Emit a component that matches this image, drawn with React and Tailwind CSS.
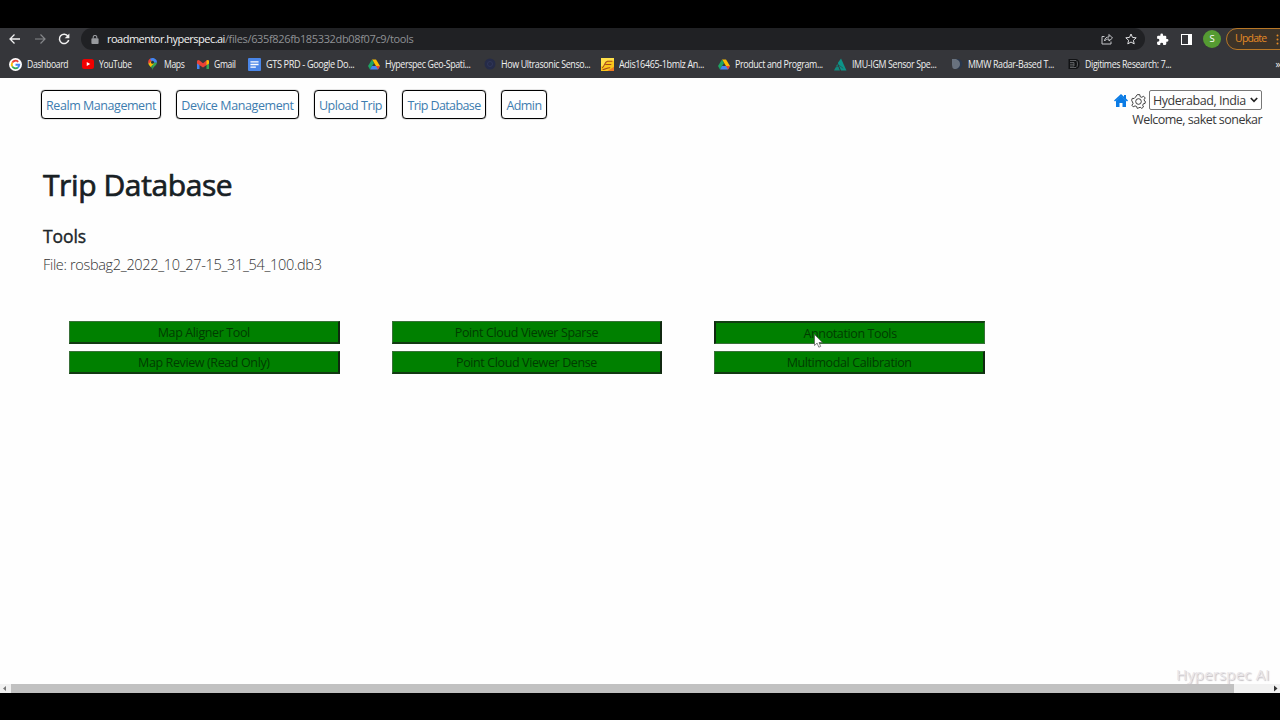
import React from 'react';

const DriveIcon = () => (
  <svg viewBox="0 0 24 22" className="w-[12px] h-[11px]">
    <path d="M8 1h8l8 13h-8z" fill="#fbbc04" />
    <path d="M8 1l4 7-8 13-4-7z" fill="#1ea362" />
    <path d="M8 14h16l-4 7H4z" fill="#4285f4" />
    <path d="M16 14h8l-4 7z" fill="#ea4335" />
  </svg>
);

const GoogleIcon = () => (
  <svg viewBox="0 0 24 24" className="w-[13px] h-[13px]">
    <circle cx="12" cy="12" r="12" fill="#fff" />
    <g fill="none" strokeWidth="3.4">
      <path d="M17 7A7 7 0 0 0 6 8.5" stroke="#ea4335" />
      <path d="M6 8.5a7 7 0 0 0 0 7" stroke="#fbbc04" />
      <path d="M6 15.5a7 7 0 0 0 10.5 2" stroke="#34a853" />
      <path d="M16.5 17.5A7 7 0 0 0 19 12.5h-7" stroke="#4285f4" />
    </g>
  </svg>
);

const YoutubeIcon = () => (
  <svg viewBox="0 0 24 20" className="w-[12px] h-[10px]">
    <rect width="24" height="20" rx="5" fill="#f00000" />
    <path d="M9.5 6v8l7-4z" fill="#fff" />
  </svg>
);

const MapsIcon = () => (
  <svg viewBox="0 0 18 24" className="w-[9px] h-[12px]">
    <path d="M9 24C8 17 0 15 0 8.500l9 0z" fill="#34a853" />
    <path d="M9 24c1-7 9-9 9-15.500H9z" fill="#34a853" />
    <path d="M1 12C-1 6 2 2 5 1l4 7.500z" fill="#ea4335" />
    <path d="M4 1.500C10-2 18 2 18 9l-9 0z" fill="#4285f4" />
    <path d="M1 12l7-7 4 6-7 7z" fill="#fbbc04" />
    <circle cx="9" cy="8.500" r="3" fill="#263238" />
  </svg>
);

const GmailIcon = () => (
  <svg viewBox="0 0 24 18" className="w-[12px] h-[9px]">
    <path d="M0 2h5v16H0z" fill="#4285f4" />
    <path d="M19 2h5v16h-5z" fill="#34a853" />
    <path d="M0 2Q2-1 5 1l7 5.500L19 1q3-2 5 1v5l-12 8L0 7z" fill="#ea4335" />
    <path d="M19 1q3-2 5 1v5l-5 3z" fill="#fbbc04" />
  </svg>
);

const DocsIcon = () => (
  <svg viewBox="0 0 24 24" className="w-[13px] h-[13px]">
    <rect width="24" height="24" rx="2" fill="#4a86e8" />
    <path d="M4.500 7h15M4.500 12h15M4.500 17h10" stroke="#fff" strokeWidth="2.400" />
  </svg>
);

const UltrasonicIcon = () => (
  <svg viewBox="0 0 24 24" className="w-[12px] h-[12px]">
    <circle cx="12" cy="12" r="11" fill="#252b48" />
    <circle cx="12" cy="12" r="5" fill="none" stroke="#303659" strokeWidth="2" />
  </svg>
);

const AdisIcon = () => (
  <svg viewBox="0 0 24 24" className="w-[13px] h-[13px]">
    <rect width="24" height="24" fill="#f9c51c" />
    <path d="M0 0h24v5H12L4 15H0z" fill="#ffe04a" />
    <path d="M2 18c5-2 4-11 10-12h9M8 12h11M3 21c6 1 8-4 14-3" fill="none" stroke="#a8481a" strokeWidth="2" />
    <path d="M12 24l12-8v8z" fill="#ef7b22" />
  </svg>
);

const ImuIcon = () => (
  <svg viewBox="0 0 24 24" className="w-[13px] h-[13px]">
    <path d="M13 1l10 22H13L7 9z" fill="#0d9488" />
    <path d="M6 11l5 12H0z" fill="#12877c" />
    <path d="M2 17l8-3 7 5" fill="none" stroke="#35363a" />
  </svg>
);

const RadarIcon = () => (
  <svg viewBox="0 0 24 24" className="w-[12px] h-[12px]">
    <circle cx="13" cy="12" r="10" fill="#29364b" />
    <path d="M2 2h8q8 3 8 10t-8 10H6q-4-2-4-8z" fill="#68717d" />
  </svg>
);

const DigitimesIcon = () => (
  <svg viewBox="0 0 24 24" className="w-[12px] h-[12px]">
    <path d="M1 2h15q7 1 7 10t-7 10H1z" fill="#111214" />
    <path d="M4 5h12q3 1 3 7t-3 7H4M4 9h8v7H4M4 12.500h8" fill="none" stroke="#74777a" strokeWidth="1.500" />
  </svg>
);

const BOOKMARKS = [
  { label: 'Dashboard', icon: GoogleIcon, width: 'w-[72px]', scale: 'scale-x-[0.86]' },
  { label: 'YouTube', icon: YoutubeIcon, width: 'w-[65px]', scale: 'scale-x-[0.85]' },
  { label: 'Maps', icon: MapsIcon, width: 'w-[50px]', scale: 'scale-x-[0.86]' },
  { label: 'Gmail', icon: GmailIcon, width: 'w-[52px]', scale: 'scale-x-[0.86]' },
  { label: 'GTS PRD - Google Do...', icon: DocsIcon, width: 'w-[119px]', scale: 'scale-x-[0.915]' },
  { label: 'Hyperspec Geo-Spati...', icon: DriveIcon, width: 'w-[116px]', scale: 'scale-x-[0.885]' },
  { label: 'How Ultrasonic Senso...', icon: UltrasonicIcon, width: 'w-[118px]', scale: 'scale-x-[0.89]' },
  { label: 'Adis16465-1bmlz An...', icon: AdisIcon, width: 'w-[116px]', scale: 'scale-x-[0.9]' },
  { label: 'Product and Program...', icon: DriveIcon, width: 'w-[117px]', scale: 'scale-x-[0.885]' },
  { label: 'IMU-IGM Sensor Spe...', icon: ImuIcon, width: 'w-[116px]', scale: 'scale-x-[0.885]' },
  { label: 'MMW Radar-Based T...', icon: RadarIcon, width: 'w-[117px]', scale: 'scale-x-[0.885]' },
  { label: 'Digitimes Research: 7...', icon: DigitimesIcon, width: 'w-[110px]', scale: 'scale-x-[0.88]' }
];

const NAV_ITEMS = [
  { label: 'Realm Management', width: 'w-[120px]', tracking: 'tracking-[-0.45px]' },
  { label: 'Device Management', width: 'w-[123px]', tracking: 'tracking-[-0.4px]' },
  { label: 'Upload Trip', width: 'w-[73px]', tracking: 'tracking-[-0.45px]' },
  { label: 'Trip Database', width: 'w-[84px]', tracking: 'tracking-[-0.6px]' },
  { label: 'Admin', width: 'w-[46px]', tracking: 'tracking-[-0.6px]' }
];

const TOOLS = [
  { label: 'Map Aligner Tool' },
  { label: 'Point Cloud Viewer Sparse' },
  { label: 'Annotation Tools', pressed: true },
  { label: 'Map Review (Read Only)' },
  { label: 'Point Cloud Viewer Dense' },
  { label: 'Multimodal Calibration' }
];

const AddressBar = () => (
  <div className="flex h-[22px] items-center bg-[#35363a]">
    <div className="flex w-[81px] shrink-0 items-center pl-[9px]">
      <svg viewBox="0 0 12 12" className="h-3 w-3" fill="none" stroke="#f1f1f1" strokeWidth="1.3">
        <path d="M11 6H1.500M5.500 1.500L1 6l4.500 4.500" />
      </svg>
      <svg viewBox="0 0 12 12" className="ml-[13px] h-3 w-3" fill="none" stroke="#85878a" strokeWidth="1.2">
        <path d="M1 6h9.500M6.500 1.500L11 6l-4.500 4.500" />
      </svg>
      <svg viewBox="0 0 12 12" className="ml-[12px] h-3 w-3" fill="none" stroke="#f1f1f1" strokeWidth="1.5">
        <path d="M10 3.200A4.700 4.700 0 1 0 10.700 7" />
        <path d="M11.400.5v4.700H6.700z" fill="#f1f1f1" stroke="none" />
      </svg>
    </div>
    <div className="flex h-[22px] w-[1064px] shrink-0 items-center rounded-full bg-[#202124] pl-[10px] pr-2">
      <svg viewBox="0 0 8 10" className="h-[9px] w-[8px]">
        <rect y="3.500" width="8" height="6.500" rx="1" fill="#989a9e" />
        <path d="M2 4V2.500a2 2 0 0 1 4 0V4" fill="none" stroke="#989a9e" strokeWidth="1.200" />
      </svg>
      <div className="ml-[8px] whitespace-nowrap text-[11px] leading-[22px] text-[#8f9194]">
        <span className="tracking-[-0.52px] text-[#f1f1f1]">roadmentor.hyperspec.ai</span>
        <span className="tracking-[-0.35px]">/files/635f826fb185332db08f07c9/tools</span>
      </div>
      <svg viewBox="0 0 12 12" className="ml-auto h-3 w-3" fill="none" stroke="#c4c6c9">
        <path d="M3.500 3.500H1v7.500h9V8.500M3.500 8c.3-3 2-4 4.500-4V1.500L11.500 5 8 8V6C6 6 4.500 6.500 3.500 8z" />
      </svg>
      <svg viewBox="0 0 12 12" className="ml-[12px] h-3 w-3" fill="none" stroke="#dfe0e2">
        <path d="M6 1l1.500 3.400 3.700.4-2.800 2.500.8 3.600L6 9 2.800 10.900l.8-3.600L.8 4.800l3.700-.4z" />
      </svg>
    </div>
    <div className="flex min-w-0 flex-1 items-center overflow-hidden pl-[11px]">
      <svg viewBox="0 0 24 24" className="h-[13px] w-[13px] shrink-0" fill="#fff">
        <path d="M20.500 11H19V7a2 2 0 0 0-2-2h-4V3.500a2.500 2.500 0 0 0-5 0V5H4a2 2 0 0 0-2 2v3.800h1.500a2.700 2.700 0 0 1 0 5.400H2V20a2 2 0 0 0 2 2h3.800v-1.500a2.700 2.700 0 0 1 5.400 0V22H17a2 2 0 0 0 2-2v-4h1.500a2.500 2.500 0 0 0 0-5z" />
      </svg>
      <div className="ml-[12px] h-[11px] w-[11px] shrink-0 border-[1.500px] border-r-4 border-white" />
      <div className="ml-[11px] flex h-[18px] w-[18px] shrink-0 items-center justify-center rounded-full bg-[#559b32] text-[9.5px] text-white">
        S
      </div>
      <div className="ml-[5px] flex h-[22px] w-[76px] shrink-0 items-center rounded-full border border-[#b87726] bg-[#3c3328] pl-[8px] text-[10.5px] text-[#e58a25]">
        <span className="w-[31px] tracking-[-0.75px]">Update</span>
        <svg viewBox="0 0 3 11" className="ml-[10px] h-[11px] w-[3px]" fill="#e58a25">
          <circle cx="1.500" cy="1.500" r="1" />
          <circle cx="1.500" cy="5.500" r="1" />
          <circle cx="1.500" cy="9.500" r="1" />
        </svg>
      </div>
    </div>
  </div>
);

const BookmarkBar = () => (
  <div className="flex h-[28px] items-center bg-[#35363a] pl-[9px] text-[10px] leading-[28px] tracking-[-0.4px] text-[#f0f0f0]">
    {BOOKMARKS.map(({ label, icon: Icon, width, scale }) => (
      <div key={label} className={`flex shrink-0 items-center whitespace-nowrap ${width}`}>
        <span className="flex w-[13px] shrink-0 items-center justify-center">
          <Icon />
        </span>
        <span className={`ml-[5px] shrink-0 origin-left ${scale}`}>{label}</span>
      </div>
    ))}
    <span className="ml-auto">»</span>
  </div>
);

const Header = () => (
  <header className="flex h-[60px] items-start justify-between pl-[41px] pr-[18px] pt-[12px]">
    <nav className="flex gap-[15px]">
      {NAV_ITEMS.map(({ label, width, tracking }) => (
        <a
          key={label}
          className={`flex h-[29px] items-center justify-center whitespace-nowrap rounded-[4px] border border-black pt-[3px] text-[12.5px] text-[#3d7caf] shadow-[0_0_1px_#000] ${width} ${tracking}`}
        >
          {label}
        </a>
      ))}
    </nav>
    <div className="flex flex-col items-end text-[12.5px] text-[#383838]">
      <div className="flex h-[20px] items-center">
        <svg viewBox="0 0 14 13" className="h-[13px] w-[14px]" fill="#0a7be5">
          <path d="M7 0l3 2.700V1h2v3.500L14 6.500l-1 1L7 2 1 7.500l-1-1z" />
          <path d="M7 1.500l5 5V13H8.500V9h-3v4H2V6.500z" />
        </svg>
        <svg viewBox="0 0 24 24" className="ml-[3px] mt-[2px] h-[15px] w-[15px]" fill="none" stroke="#333" strokeWidth="1.500">
          <path d="M10 1h4l.7 3.300 2.500 1 2.800-1.800 2.700 2.800-1.800 2.800 1 2.500L23 12l-.5 3-2.800.7-1 2.300 1.300 2.700-2.800 2.300-2.500-1.800-2.500 1L10 23l-1-3-2.500-1L3.500 20.500 1.500 18l1.800-3-1-2.300L1 10l1-3 3 .2 2-2z" />
          <circle cx="12" cy="12" r="4.500" />
        </svg>
        <div className="ml-[3px] flex h-[20px] w-[113px] items-center justify-between whitespace-nowrap rounded-[2px] border border-[#777] px-[3px]">
          <span className="pt-[2px] tracking-[-0.45px]">Hyderabad, India</span>
          <svg viewBox="0 0 8 6" className="h-[6px] w-[8px] shrink-0" fill="none" stroke="#222" strokeWidth="1.700">
            <path d="M.8 1L4 4.300 7.200 1" />
          </svg>
        </div>
      </div>
      <div className="whitespace-nowrap leading-[19px] tracking-[-0.52px]">Welcome, saket sonekar</div>
    </div>
  </header>
);

const ToolButton = ({ label, pressed }) => (
  <button
    className={`flex h-[23px] items-center justify-center bg-[#008000] text-[12.5px] tracking-[-0.38px] text-[#003c00] ${
      pressed
        ? 'border-2 border-b border-r border-[#123e12] border-l-[#102810] border-b-[#397039] border-r-[#397039] pt-[2px]'
        : 'border border-b-2 border-r-2 border-[#397039] border-b-[#123a12] border-r-[#102810] pt-[3px]'
    }`}
  >
    {label}
  </button>
);

const ScrollBar = () => (
  <div className="flex h-[9px] items-center bg-[#f1f1f1]">
    <svg viewBox="0 0 11 9" className="h-[9px] w-[11px]" fill="#777">
      <path d="M6 2v5L3 4.500z" />
    </svg>
    <div className="h-[9px] w-[1223px] bg-[#c1c1c1]" />
    <svg viewBox="0 0 11 9" className="ml-auto h-[9px] w-[11px]" fill="#333">
      <path d="M5 1.500v6L8.500 4.500z" />
    </svg>
  </div>
);

const App = () => {
  return (
    <div className="relative flex h-[720px] w-[1280px] flex-col overflow-hidden bg-black pt-[28px] font-['Open_Sans','Noto_Sans',sans-serif]">
      <AddressBar />
      <BookmarkBar />
      <main className="h-[606px] bg-[#fefefe]">
        <Header />
        <div className="pl-[43px]">
          <h1 className="pt-[27px] text-[30px] leading-[40px] tracking-[-0.4px] text-[#182024] [-webkit-text-stroke:0.7px_#182024]">
            Trip Database
          </h1>
          <h2 className="mt-[19px] text-[17.500px] leading-[24px] tracking-[-0.1px] text-[#20262a] [-webkit-text-stroke:0.4px_#20262a]">
            Tools
          </h2>
          <p className="mt-[5px] text-[14.500px] font-light leading-[24px] tracking-[-0.33px] text-[#333]">
            File: rosbag2_2022_10_27-15_31_54_100.db3
          </p>
        </div>
        <div className="ml-[69px] mt-[44px] grid w-[916px] grid-cols-3 gap-x-[52px] gap-y-[7px]">
          {TOOLS.map((tool) => (
            <ToolButton key={tool.label} {...tool} />
          ))}
        </div>
      </main>
      <ScrollBar />
      {/* mouse pointer */}
      <svg viewBox="0 0 9 14" className="absolute left-[814px] top-[334px] h-[14px] w-[9px]">
        <path d="M.5.5v11l2.600-2.300 1.700 4 1.900-.8-1.700-3.900h3.400z" fill="#fff" stroke="#555" strokeWidth=".7" />
      </svg>
      {/* watermark */}
      <div className="absolute left-[1176px] top-[663px] whitespace-nowrap text-[15px] leading-[22px] tracking-[0.15px] text-[#e9e6e9] [text-shadow:1px_1px_1px_#c2bec2]">
        Hyperspec AI
      </div>
    </div>
  );
};

export default App;
